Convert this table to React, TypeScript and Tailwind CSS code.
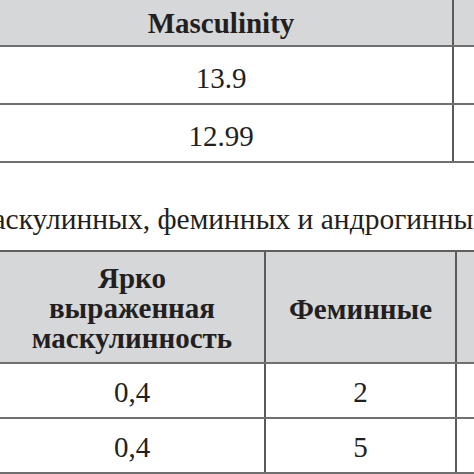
import React from "react";

const serif = { fontFamily: '"Liberation Serif", "DejaVu Serif", serif' };

export default function App() {
  return (
    <div
      className="w-[474px] h-[474px] overflow-hidden bg-white text-[#231f20] flex flex-col"
      style={serif}
    >
      {/* Top table */}
      <div className="flex flex-col">
        <div className="flex h-[47px] bg-[#d6d7d9] border-b-2 border-[#6f6f6f]">
          <div className="w-[454px] border-r-2 border-[#5a5a5a] flex items-center justify-center pr-[10px] pt-[1px] text-[29px] leading-none font-bold">
            Masculinity
          </div>
          <div className="flex-1" />
        </div>
        <div className="flex h-[58px] border-b-2 border-[#6f6f6f]">
          <div className="w-[454px] border-r-2 border-[#5a5a5a] flex items-center justify-center pr-[10px] pt-[6px] text-[29px] leading-none">
            13.9
          </div>
          <div className="flex-1" />
        </div>
        <div className="flex h-[58px] border-b-2 border-[#6f6f6f]">
          <div className="w-[454px] border-r-2 border-[#5a5a5a] flex items-center justify-center pr-[10px] pt-[6px] text-[29px] leading-none">
            12.99
          </div>
          <div className="flex-1" />
        </div>
      </div>

      {/* Caption */}
      <div className="h-[90px] overflow-hidden flex items-center">
        <div className="whitespace-nowrap ml-[-26px] mt-[26px] text-[29.5px] leading-none">
          маскулинных, феминных и андрогинных
        </div>
      </div>

      {/* Bottom table */}
      <div className="flex flex-col border-t-2 border-[#5f5f5f]">
        <div className="flex h-[112px] bg-[#d6d7d9] border-b-2 border-[#6f6f6f]">
          <div className="w-[266px] border-r-2 border-[#5a5a5a] flex items-center justify-center text-center text-[29px] font-bold leading-[30px] pt-[2px]">
            <span>
              Ярко
              <br />
              выраженная
              <br />
              маскулинность
            </span>
          </div>
          <div className="w-[191px] border-r-2 border-[#5a5a5a] flex items-center justify-center text-[29px] font-bold leading-none pt-[4px]">
            Феминные
          </div>
          <div className="flex-1" />
        </div>
        <div className="flex h-[55px] border-b-2 border-[#6f6f6f]">
          <div className="w-[266px] border-r-2 border-[#5a5a5a] flex items-center justify-center text-[29px] leading-none pt-[4px]">
            0,4
          </div>
          <div className="w-[191px] border-r-2 border-[#5a5a5a] flex items-center justify-center text-[29px] leading-none pt-[4px]">
            2
          </div>
          <div className="flex-1" />
        </div>
        <div className="flex h-[55px] border-b-2 border-[#6f6f6f]">
          <div className="w-[266px] border-r-2 border-[#5a5a5a] flex items-center justify-center text-[29px] leading-none pt-[4px]">
            0,4
          </div>
          <div className="w-[191px] border-r-2 border-[#5a5a5a] flex items-center justify-center text-[29px] leading-none pt-[4px]">
            5
          </div>
          <div className="flex-1" />
        </div>
      </div>
    </div>
  );
}
